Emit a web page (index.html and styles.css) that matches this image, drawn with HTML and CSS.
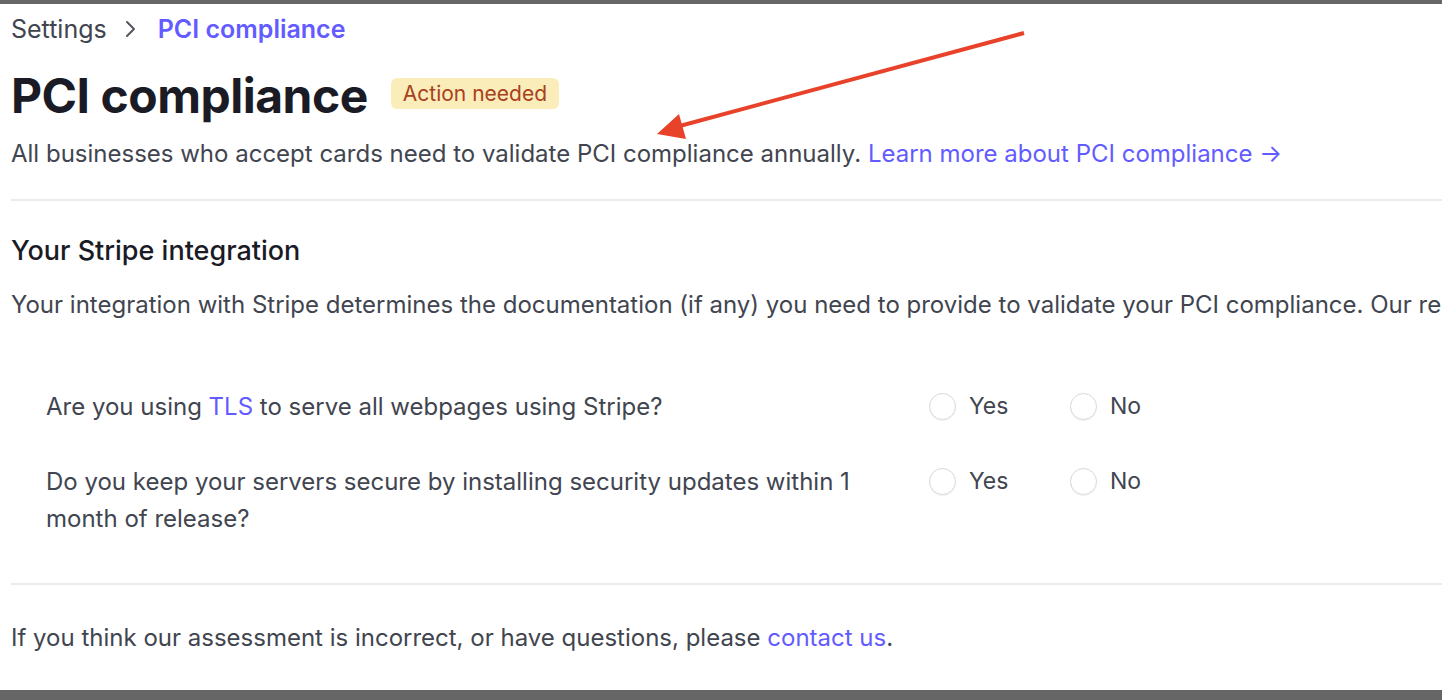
FILE: index.html
```html
<!DOCTYPE html>
<html lang="en">
<head>
    <meta charset="UTF-8">
    <meta name="viewport" content="width=device-width, initial-scale=1.0">
    <title>PCI compliance</title>
    <link rel="stylesheet" href="styles.css">
</head>
<body>
    <div class="frame">
        <div class="page">
            <div class="breadcrumb">
                <span class="crumb">Settings</span>
                <svg class="chevron" width="14" height="22" viewBox="0 0 14 22">
                    <path d="M3 4 L10 11 L3 18" fill="none" stroke="#55575f" stroke-width="2" stroke-linecap="round" stroke-linejoin="round"/>
                </svg>
                <span class="crumb current">PCI compliance</span>
            </div>

            <div class="title-row">
                <h1>PCI compliance</h1>
                <span class="badge">Action needed</span>
            </div>
            <p class="lead">All businesses who accept cards need to validate PCI compliance annually. <a href="#" class="link">Learn more about PCI compliance &rarr;</a></p>

            <hr class="divider">

            <h2>Your Stripe integration</h2>
            <p class="intro">Your integration with Stripe determines the documentation (if any) you need to provide to validate your PCI compliance. Our records show that you are using a custom integration.</p>

            <div class="questions">
                <div class="question">
                    <div class="q-text">Are you using <a href="#" class="link">TLS</a> to serve all webpages using Stripe?</div>
                    <div class="options">
                        <label class="option"><span class="radio"></span>Yes</label>
                        <label class="option"><span class="radio"></span>No</label>
                    </div>
                </div>
                <div class="question">
                    <div class="q-text">Do you keep your servers secure by installing security updates within 1 month of release?</div>
                    <div class="options">
                        <label class="option"><span class="radio"></span>Yes</label>
                        <label class="option"><span class="radio"></span>No</label>
                    </div>
                </div>
            </div>

            <hr class="divider">

            <p class="footer-text">If you think our assessment is incorrect, or have questions, please <a href="#" class="link">contact us</a>.</p>
        </div>

        <!-- annotation arrow drawn over the page -->
        <svg class="arrow" width="1442" height="700" viewBox="0 0 1442 700">
            <line x1="1024" y1="33" x2="676" y2="127" stroke="#e8432a" stroke-width="4"/>
            <polygon points="657,134 679,114 686,139" fill="#e8432a"/>
        </svg>
    </div>
</body>
</html>
```

FILE: styles.css
```css
html, body {
    margin: 0;
    padding: 0;
}
body {
    font-family: Inter, "Noto Sans", sans-serif;
    background-color: #666;
    color: #41454f;
    overflow: hidden;
}
.frame {
    position: relative;
    margin-top: 4px;
    height: 686px;
    background-color: #fff;
    overflow: hidden;
}
.page {
    padding: 0 0 0 11px;
}
.breadcrumb {
    display: flex;
    align-items: center;
    height: 50px;
    font-size: 25px;
}
.crumb {
    color: #41454f;
}
.crumb.current {
    color: #635bff;
    font-weight: 600;
}
.chevron {
    margin: 0 20px 0 17px;
}
.title-row {
    display: flex;
    align-items: center;
    margin-top: 4px;
}
h1 {
    margin: 0;
    font-size: 48px;
    font-weight: 700;
    color: #1a1b25;
    letter-spacing: -0.5px;
    line-height: 76px;
}
.badge {
    margin-left: 23px;
    background-color: #fbedb9;
    color: #a8401e;
    font-size: 21px;
    line-height: 25px;
    padding: 3px 12px;
    border-radius: 6px;
    margin-top: -6px;
}
.lead {
    margin: 4px 0 0;
    font-size: 24px;
    line-height: 32px;
    white-space: nowrap;
}
.link {
    color: #635bff;
    text-decoration: none;
}
.divider {
    border: none;
    border-top: 2px solid #ebebeb;
    margin: 29px 0 0;
}
h2 {
    margin: 32px 0 0;
    font-size: 27px;
    font-weight: 500;
    color: #1a1b25;
    line-height: 36px;
}
.intro {
    margin: 20px 0 0;
    font-size: 24px;
    line-height: 32px;
    white-space: nowrap;
}
.questions {
    padding: 67px 0 17px 35px;
    display: flex;
    flex-direction: column;
    gap: 38px;
}
.question {
    display: flex;
    align-items: flex-start;
}
.q-text {
    width: 840px;
    font-size: 24px;
    line-height: 37px;
}
.options {
    display: flex;
    margin-left: 43px;
}
.option {
    display: flex;
    align-items: center;
    width: 141px;
    font-size: 23px;
    line-height: 37px;
    color: #41454f;
}
.radio {
    width: 25px;
    height: 25px;
    border: 1.5px solid #d5d7dd;
    border-radius: 50%;
    margin-right: 13px;
    box-shadow: 0 1px 1px rgba(0, 0, 0, 0.06);
}
.footer-text {
    margin: 37px 0 0;
    font-size: 24px;
    line-height: 32px;
}
.arrow {
    position: absolute;
    left: 0;
    top: -4px;
    pointer-events: none;
}
```
